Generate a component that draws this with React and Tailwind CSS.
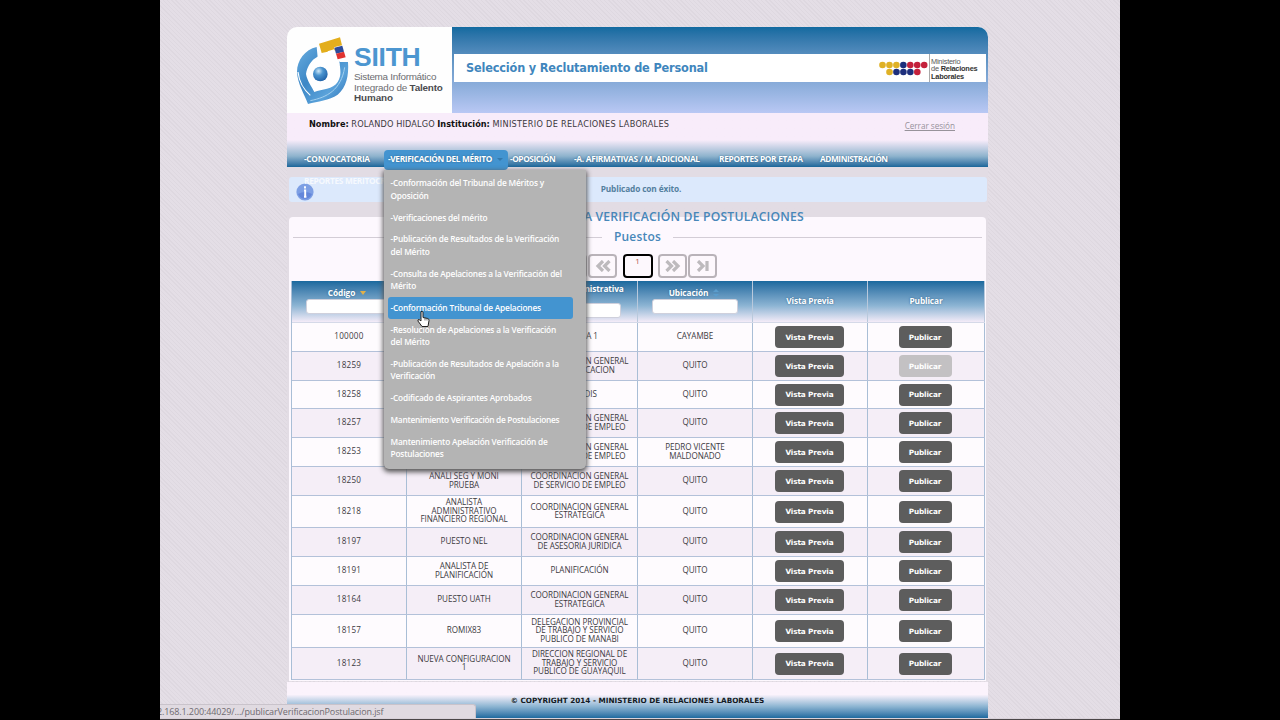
import React from "react";

const rows = [
  { h: "h-[29px]", code: "100000", post: [], unit: ["PRUEBA 1"], place: ["CAYAMBE"] },
  { h: "h-[29px]", code: "18259", post: [], unit: ["COORDINACION GENERAL", "DE PLANIFICACION"], place: ["QUITO"], off: true },
  { h: "h-[28px]", code: "18258", post: [], unit: ["CONADIS"], place: ["QUITO"] },
  { h: "h-[29px]", code: "18257", post: [], unit: ["COORDINACION GENERAL", "DE SERVICIO DE EMPLEO"], place: ["QUITO"] },
  { h: "h-[29px]", code: "18253", post: [], unit: ["COORDINACION GENERAL", "DE SERVICIO DE EMPLEO"], place: ["PEDRO VICENTE", "MALDONADO"] },
  { h: "h-[29px]", code: "18250", post: ["ANALI SEG Y MONI", "PRUEBA"], unit: ["COORDINACION GENERAL", "DE SERVICIO DE EMPLEO"], place: ["QUITO"] },
  { h: "h-[32px]", code: "18218", post: ["ANALISTA", "ADMINISTRATIVO", "FINANCIERO REGIONAL"], unit: ["COORDINACION GENERAL", "ESTRATEGICA"], place: ["QUITO"] },
  { h: "h-[29px]", code: "18197", post: ["PUESTO NEL"], unit: ["COORDINACION GENERAL", "DE ASESORIA JURIDICA"], place: ["QUITO"] },
  { h: "h-[29px]", code: "18191", post: ["ANALISTA DE", "PLANIFICACIÓN"], unit: ["PLANIFICACIÓN"], place: ["QUITO"] },
  { h: "h-[29px]", code: "18164", post: ["PUESTO UATH"], unit: ["COORDINACION GENERAL", "ESTRATEGICA"], place: ["QUITO"] },
  { h: "h-[33px]", code: "18157", post: ["ROMIX83"], unit: ["DELEGACION PROVINCIAL", "DE TRABAJO Y SERVICIO", "PUBLICO DE MANABI"], place: ["QUITO"] },
  { h: "h-[32px]", code: "18123", post: ["NUEVA CONFIGURACION", "1"], unit: ["DIRECCION REGIONAL DE", "TRABAJO Y SERVICIO", "PUBLICO DE GUAYAQUIL"], place: ["QUITO"] },
];

const menu = [
  ["-Conformación del Tribunal de Méritos y", "Oposición"],
  ["-Verificaciones del mérito"],
  ["-Publicación de Resultados de la Verificación", "del Mérito"],
  ["-Consulta de Apelaciones a la Verificación del", "Mérito"],
  ["-Conformación Tribunal de Apelaciones"],
  ["-Resolución de Apelaciones a la Verificación", "del Mérito"],
  ["-Publicación de Resultados de Apelación a la", "Verificación"],
  ["-Codificado de Aspirantes Aprobados"],
  ["Mantenimiento Verificación de Postulaciones"],
  ["Mantenimiento Apelación Verificación de", "Postulaciones"],
];

const columns = "grid grid-cols-[115px_115px_116px_115px_115px_117px]";

function Lines({ items }) {
  return items.map((t) => <div key={t}>{t}</div>);
}

function Logo() {
  return (
    <svg viewBox="10 15 171 216" className="ml-[6px] mt-[8px] h-[72px] w-[57px] shrink-0">
      <defs>
        <linearGradient id="ring" x1="0" y1="0" x2="1" y2="1">
          <stop offset="0" stopColor="#6aaee0" />
          <stop offset="0.4" stopColor="#3c87c6" />
          <stop offset="0.7" stopColor="#5aa2da" />
          <stop offset="1" stopColor="#2a6db3" />
        </linearGradient>
        <radialGradient id="ball" cx="0.38" cy="0.3" r="0.75">
          <stop offset="0" stopColor="#cfe8f8" />
          <stop offset="0.4" stopColor="#4a94cf" />
          <stop offset="1" stopColor="#1d5fa6" />
        </radialGradient>
      </defs>
      <path d="M81 51C46 59 22 90 22 126C24 163 44 192 55 222C85 213 118 212 144 194C170 172 178 138 175 96L150 96L135 75L84 82Z" fill="url(#ring)" />
      <path d="M86 50L140 60L148 92L150 100C151 118 157 136 144 156C130 178 96 178 74 186C66 170 52 152 49 132C52 112 62 98 72 88L88 77Z" fill="#fff" />
      <path d="M25 126C29 160 42 178 62 196" fill="none" stroke="#fff" strokeWidth="3.5" />
      <path d="M62 212C112 202 154 180 165 112" fill="none" stroke="#a3d0ef" strokeWidth="3" />
      <circle cx="92" cy="132" r="22" fill="url(#ball)" />
      <path d="M88 41L151 22L157 46L133 52L136 61L96 69Z" fill="#e3ae1c" />
      <path d="M114 64L133 58L140 82L118 84Z" fill="#fff" />
      <path d="M134 53L158 47L163 65L139 71Z" fill="#2c4b9b" />
      <path d="M139 71L163 65L168 82L144 88Z" fill="#e0322f" />
    </svg>
  );
}

function MinistryDots() {
  const top = ["#dfb126", "#dfb126", "#dfb126", "#1d2f7c", "#c4213c", "#c4213c", "#c4213c"];
  const low = ["#dfb126", "#1d2f7c", "#1d2f7c", "#1d2f7c", "#c4213c"];
  return (
    <svg viewBox="0 0 49 15" className="h-[15px] w-[49px]">
      {top.map((c, i) => <circle key={i} cx={3.5 + i * 6.95} cy="4" r="3.3" fill={c} />)}
      {low.map((c, i) => <circle key={i} cx={10.5 + i * 6.95} cy="11" r="3.3" fill={c} />)}
    </svg>
  );
}

function PageButton({ d }) {
  return (
    <div className="flex h-[24px] w-[29px] items-center justify-center rounded-[4px] border-2 border-[#b9b3b9] bg-[#fdf8fd]">
      <svg viewBox="0 0 16 12" className="h-[12px] w-[16px]" fill="none" stroke="#bdbabd" strokeWidth="3.2">
        <path d={d} />
      </svg>
    </div>
  );
}

function ActionButton({ children, off, wide }) {
  return (
    <button
      className={`h-[22px] rounded-[4px] pt-px text-center font-['DejaVu_Sans',sans-serif] text-[7.3px] font-bold leading-none text-white ${wide ? "w-[69px] tracking-[-0.1px]" : "w-[53px] tracking-[-0.15px]"} ${off ? "bg-[#c3c1c3]" : "bg-[#5d5d5d]"}`}
    >
      {children}
    </button>
  );
}

function Input({ className }) {
  return <div className={`h-[15px] rounded-[3px] border border-[#cfd0dc] bg-white ${className}`} />;
}

function Header() {
  return (
    <header className="flex h-[86px] overflow-hidden rounded-t-[10px] bg-[#fefefe]">
      <div className="flex w-[165px] shrink-0">
        <Logo />
        <div className="ml-[4px] mt-[17px] whitespace-nowrap font-['Liberation_Sans',sans-serif] text-[#6c6c70]">
          <div className="h-[26px] text-[26.5px] font-bold leading-[27px] tracking-[-0.25px] text-[#4c96d0]">SIITH</div>
          <div className="mt-[2px] text-[9.9px] leading-[10.7px]">
            <div className="tracking-[-0.27px]">Sistema Informático</div>
            <div className="tracking-[-0.2px]">Integrado de <b className="text-[#4b4b4f]">Talento</b></div>
            <b className="tracking-[-0.1px] text-[#4b4b4f]">Humano</b>
          </div>
        </div>
      </div>
      <div className="flex flex-1 flex-col bg-linear-to-b from-[#116aa0] via-[#6b9bca] via-45% to-[#b9c8f4] pt-[27px]">
        <div className="mx-[2px] flex h-[28px] items-center justify-between bg-white">
          <h1 className="ml-[12px] whitespace-nowrap font-['DejaVu_Sans_Condensed','DejaVu_Sans',sans-serif] text-[12.6px] font-bold tracking-[-0.17px] text-[#3f86bd]">Selección y Reclutamiento de Personal</h1>
          <div className="flex h-full items-center">
            <MinistryDots />
            <div className="ml-[1px] h-full w-[57px] whitespace-nowrap border-l border-[#aaa] pl-[1px] pt-[4px] font-['Liberation_Sans',sans-serif] text-[7.4px] leading-[7.3px] tracking-[-0.22px] text-[#555]">
              <div>Ministerio</div>
              <div>de <b className="text-[#333]">Relaciones</b></div>
              <b className="text-[#333]">Laborales</b>
            </div>
          </div>
        </div>
      </div>
    </header>
  );
}

function Nav() {
  const item = "flex h-[20px] items-center whitespace-nowrap pb-[2px]";
  return (
    <nav className="flex h-[37px] flex-wrap content-start pl-[17px] font-['Open_Sans',sans-serif] text-[8.3px] font-bold tracking-[-0.3px] text-white [text-shadow:0_0_2px_#2b5f85]">
      <div className={`${item} w-[80px]`}>-CONVOCATORIA</div>
      <div className={`${item} w-[124px] justify-between rounded-[4px] bg-[#4394d0] pl-[4px] pr-[5px] tracking-[-0.36px]`}>
        -VERIFICACIÓN DEL MÉRITO
        <span className="h-0 w-0 border-x-[3px] border-t-[3px] border-x-transparent border-t-[#3379ad]" />
      </div>
      <div className={`${item} w-[66px] pl-[2px] tracking-[-0.45px]`}>-OPOSICIÓN</div>
      <div className={`${item} w-[145px]`}>-A. AFIRMATIVAS / M. ADICIONAL</div>
      <div className={`${item} w-[101px]`}>REPORTES POR ETAPA</div>
      <div className={`${item} w-[100px] tracking-[-0.45px]`}>ADMINISTRACIÓN</div>
      <div className="relative z-10 mt-[2px] flex h-[18px] w-[600px] items-center opacity-75 [text-shadow:none]">REPORTES MERITOCRACIA</div>
    </nav>
  );
}

function DropMenu() {
  return (
    <div className="absolute left-[384px] top-[170px] z-20 h-[299px] w-[202px] rounded-b-[5px] bg-[#b4b4b4] px-[3.5px] pt-[2.8px] font-['Open_Sans',sans-serif] text-[8.3px] font-semibold leading-[12.4px] tracking-[-0.19px] text-white shadow-[0_2px_5px_1px_#555]">
      {menu.map((lines, i) => (
        <div key={i} className={`w-[185.5px] whitespace-nowrap rounded-[3px] px-[3px] py-[4.7px] ${i === 4 ? "bg-[#4394d0]" : ""} ${i === 8 ? "tracking-[-0.28px]" : ""}`}>
          <Lines items={lines} />
        </div>
      ))}
    </div>
  );
}

function Table() {
  const head = "flex flex-col items-center border-r border-[#b9c9dc]";
  return (
    <div className="ml-[2px] mt-[3px] w-[694px] border-l border-[#a9bed6]">
      <div className={`${columns} h-[42px] border-b border-[#d5d9e8] bg-linear-to-b from-[#19699e] via-[#8cb4d3] via-60% to-[#f4ecf8] font-['Open_Sans',sans-serif] text-[8.3px] font-bold leading-[12px] tracking-[-0.12px] text-white [text-shadow:0_0_2px_#2b5f85]`}>
        <div className={`${head} pt-[6px]`}>
          <div className="flex items-center gap-[5px] pr-[4px]">Código <span className="h-0 w-0 border-x-[3px] border-t-[4px] border-x-transparent border-t-[#e2b04a]" /></div>
          <Input className="w-[86px]" />
        </div>
        <div className={`${head} pt-[6px]`}>Puesto<Input className="w-[86px]" /></div>
        <div className={`${head} whitespace-nowrap pr-[3px] pt-[2px]`}>Unidad Administrativa<Input className="mt-[8px] w-[86px]" /></div>
        <div className={`${head} pt-[6px]`}>
          <div className="flex items-center gap-[5px] pr-[2px]">
            Ubicación
            <span className="flex flex-col gap-[2px]">
              <span className="h-0 w-0 border-x-[3px] border-b-[3px] border-x-transparent border-b-[#5a9ccc]" />
              <span className="h-0 w-0 border-x-[3px] border-t-[3px] border-x-transparent border-t-[#5a9ccc]" />
            </span>
          </div>
          <Input className="w-[86px]" />
        </div>
        <div className={`${head} justify-center pb-[1px]`}>Vista Previa</div>
        <div className={`${head} justify-center pb-[1px]`}>Publicar</div>
      </div>
      {rows.map((r, i) => (
        <div
          key={r.code}
          className={`${columns} ${r.h} border-b border-[#b3c1d9] text-center font-['Open_Sans',sans-serif] text-[8.1px] leading-[8.5px] tracking-[-0.06px] text-[#3c3a3e] *:flex *:flex-col *:items-center *:justify-center *:whitespace-nowrap *:border-r *:border-[#a9bed6] ${i % 2 ? "bg-[#f5eef7]" : "bg-[#fefbfe]"}`}
        >
          <div className="pb-px tracking-[0.25px]">{r.code}</div>
          <div className="pb-px"><Lines items={r.post} /></div>
          <div className="pb-px"><Lines items={r.unit} /></div>
          <div className="pb-px"><Lines items={r.place} /></div>
          <div className="pr-px"><ActionButton wide>Vista Previa</ActionButton></div>
          <div className="pr-[2px]"><ActionButton off={r.off}>Publicar</ActionButton></div>
        </div>
      ))}
    </div>
  );
}

function Cursor() {
  return (
    <svg viewBox="0 0 13 17" className="absolute left-[417px] top-[310px] z-30 h-[18px] w-[13px]">
      <path d="M4 1.2Q5.2 .2 6 1.6V7L10.8 8Q12.2 8.4 12 10L11 16H5L1 10.6Q.5 9 2 9L4 10.4Z" fill="#fff" stroke="#222" />
      <path d="M8 7.6V10M10 8V10" stroke="#333" strokeWidth=".7" />
    </svg>
  );
}

export default function App() {
  return (
    <div className="relative h-[720px] w-[1280px] overflow-hidden bg-black px-[160px]">
      <div className="h-[719px] bg-[#e2dce4] bg-[repeating-linear-gradient(45deg,#ded8e0_0_1px,#e4dee6_1px_3px)] pl-[127px] pt-[27px]">
        <div className="w-[701px]">
          <Header />
          <div className="h-[54px] bg-linear-to-b from-[#f8ecfa] from-50% via-[#8eb3cd] via-80% to-[#17669a]">
            <div className="flex h-[37px] justify-between whitespace-nowrap pl-[22px] pr-[33px] pt-[5px] font-['DejaVu_Sans_Condensed','DejaVu_Sans',sans-serif] text-[9.1px] leading-[13px] text-[#3c393d]">
              <p><b className="text-[#111]">Nombre:</b> <span className="tracking-[0.12px]">ROLANDO HIDALGO</span> <b className="text-[#111]">Institución:</b> <span className="tracking-[0.28px]">MINISTERIO DE RELACIONES LABORALES</span></p>
              <a className="pt-px font-['Open_Sans',sans-serif] text-[8.2px] tracking-[-0.04px] text-[#97929a] underline">Cerrar sesión</a>
            </div>
            <Nav />
          </div>
          <div className="bg-[#e2dce4] pt-[10px]">
            <div className="ml-[2px] flex h-[25px] w-[698px] items-center rounded-[3px] bg-[#dce9fc]">
              <svg viewBox="0 0 18 18" className="ml-[7px] mt-[4px] h-[18px] w-[18px]">
                <circle cx="9" cy="9" r="8.6" fill="#7d9fe4" />
                <path d="M2 11A7.5 7.5 0 0 0 16 11Q9 7 2 11Z" fill="#6487da" />
                <path d="M9 3.2V5.4M8 7.4H9.2V13.6M8 13.8H10.4" fill="none" stroke="#fff" strokeWidth="1.9" />
              </svg>
              <p className="flex-1 pl-[11px] pr-[30px] text-center font-['Open_Sans',sans-serif] text-[8.3px] font-bold tracking-[-0.13px] text-[#54809f]">Publicado con éxito.</p>
            </div>
            <div className="mt-[7px] flex h-[16px] items-center justify-center whitespace-nowrap font-['Open_Sans',sans-serif] text-[12.2px] font-semibold text-[#4787b9]">
              <span className="ml-[2px] h-[8px] flex-1 self-end rounded-tl-[4px] bg-[#fdf8fe]" />
              <h2 className="bg-linear-to-b from-[#e2dce4] from-50% to-[#fdf8fe] to-50% px-[12px] tracking-[0.18px]">PUBLICACIÓN DE LA VERIFICACIÓN DE POSTULACIONES</h2>
              <span className="mr-[2px] h-[8px] flex-1 self-end rounded-tr-[4px] bg-[#fdf8fe]" />
            </div>
            <section className="mx-[2px] h-[456px] bg-[#fdf8fe]">
              <div className="flex h-[24px] items-center gap-[12px] px-[4px]">
                <span className="h-px flex-1 bg-[#d3cdd6]" />
                <h3 className="font-['Open_Sans',sans-serif] text-[12px] font-semibold tracking-[0.2px] text-[#4787b9]">Puestos</h3>
                <span className="h-px flex-1 bg-[#d3cdd6]" />
              </div>
              <div className="mt-[5px] flex h-[24px] justify-center">
                <PageButton d="M13 1L8 6L13 11M4 1V11" />
                <span className="w-px" />
                <PageButton d="M8 1L3 6L8 11M14.5 1L9.5 6L14.5 11" />
                <div className="mx-[5.5px] h-[24px] w-[30px] rounded-[4px] border-2 border-black bg-[#fdf8fd] text-center font-['Open_Sans',sans-serif] text-[8px] leading-[10px] text-[#b3574d]">1</div>
                <PageButton d="M1.5 1L6.5 6L1.5 11M8 1L13 6L8 11" />
                <span className="w-px" />
                <PageButton d="M3 1L8 6L3 11M12 1V11" />
              </div>
              <Table />
            </section>
          </div>
          <footer className="mt-px h-[36px] bg-linear-to-b from-[#fbf3fc] from-35% via-[#8db5d2] via-68% to-[#1b6a9f] pt-[12px] text-center font-['DejaVu_Sans',sans-serif] text-[7.25px] font-bold leading-[14px] text-[#141b24]">
            © COPYRIGHT 2014 - MINISTERIO DE RELACIONES LABORALES
          </footer>
        </div>
      </div>
      <DropMenu />
      <Cursor />
      <div className="absolute bottom-0 left-[160px] h-[2px] w-[960px] border-t border-[#d9d2da] bg-[#4b4648]" />
      <div className="absolute left-[160px] top-[704px] z-30 h-[14px] w-[316px] overflow-hidden whitespace-nowrap rounded-tr-[3px] border-r border-t border-[#c9c3cb] bg-[#e0dae1] font-['Open_Sans',sans-serif] text-[9px] leading-[14px] tracking-[-0.12px] text-[#6f6a70]">
        <span className="relative -left-[3px]">2.168.1.200:44029/.../publicarVerificacionPostulacion.jsf</span>
      </div>
    </div>
  );
}
